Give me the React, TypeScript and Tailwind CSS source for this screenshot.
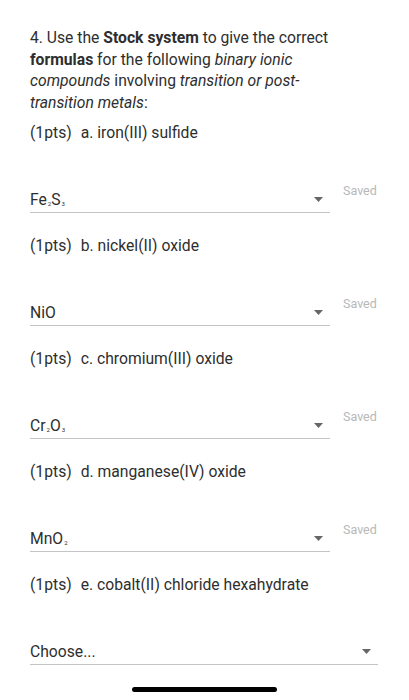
const ITEMS = [
  { label: 'a. iron(III) sulfide', value: [['Fe', '2'], ['S', '3']], saved: true },
  { label: 'b. nickel(II) oxide', value: [['NiO', '']], saved: true },
  { label: 'c. chromium(III) oxide', value: [['Cr', '2'], ['O', '3']], saved: true },
  { label: 'd. manganese(IV) oxide', value: [['MnO', '2']], saved: true },
  { label: 'e. cobalt(II) chloride hexahydrate', value: null, saved: false },
];

function Arrow() {
  return (
    <svg width="9" height="5" viewBox="0 0 9 5" className="shrink-0">
      <path d="M0 0 L9 0 L4.5 5 Z" fill="#666" />
    </svg>
  );
}

export default function App() {
  return (
    <div
      className="min-h-[700px] w-[409px] bg-white pl-[30px] pt-[27px] text-[#2e2e2e]"
      style={{ fontFamily: 'Roboto, "Liberation Sans", sans-serif' }}
    >
      <p className="w-[312px] text-[15.7px] leading-[21.5px]">
        4. Use the <b className="font-bold">Stock system</b> to give the correct{' '}
        <b className="font-bold">formulas</b> for the following <i>binary ionic compounds</i> involving{' '}
        <i>transition or post-transition metals</i>:
      </p>
      <div className="mt-[9px]">
        {ITEMS.map((item) => (
          <div key={item.label}>
            <div className="flex h-[22px] items-center text-[15.7px]">
              <span>(1pts)</span>
              <span className="ml-[9px]">{item.label}</span>
            </div>
            <div className="mb-[22px] mt-[40px] flex items-start">
              <div
                className={`flex h-[29px] items-center border-b-[1.5px] border-[#c4c4c4] pr-[7px] pt-[3px] ${
                  item.saved ? 'w-[300px]' : 'w-[348px]'
                }`}
              >
                <span className="flex-1 text-[15.7px] leading-none">
                  {item.value
                    ? item.value.map(([el, n]) => (
                        <span key={el}>
                          {el}
                          {n ? <sub className="ml-[1px] text-[6px]">{n}</sub> : null}
                        </span>
                      ))
                    : 'Choose...'}
                </span>
                <Arrow />
              </div>
              {item.saved ? (
                <span className="ml-[13px] mt-[-2px] text-[12.5px] text-[#b8b8b8]">Saved</span>
              ) : null}
            </div>
          </div>
        ))}
      </div>
      <div className="ml-[102px] mt-[16px] h-[5px] w-[145px] rounded-full bg-black" />
    </div>
  );
}
